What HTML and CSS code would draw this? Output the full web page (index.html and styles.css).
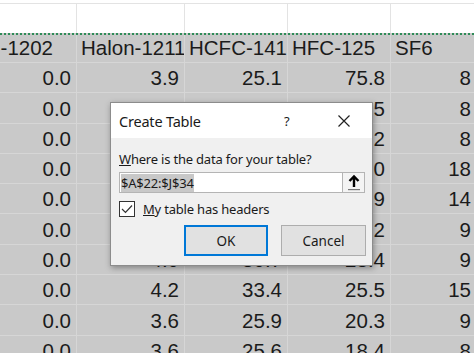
FILE: index.html
```html
<!DOCTYPE html>
<html lang="en">
<head>
  <meta charset="UTF-8" />
  <meta name="viewport" content="width=device-width, initial-scale=1.0"/>
  <title>Create Table</title>
  <link rel="stylesheet" href="styles.css">
</head>
<body>

  <div class="sheet">
    <div class="row blank">
      <div class="cell"></div><div class="cell"></div><div class="cell"></div><div class="cell"></div><div class="cell"></div>
    </div>

    <div class="selection">
      <div class="row head">
        <div class="cell">Halon-1202</div>
        <div class="cell">Halon-1211</div>
        <div class="cell">HCFC-141</div>
        <div class="cell">HFC-125</div>
        <div class="cell">SF6</div>
      </div>
      <div class="row"><div class="cell num">0.0</div><div class="cell num">3.9</div><div class="cell num">25.1</div><div class="cell num">75.8</div><div class="cell num">8</div></div>
      <div class="row"><div class="cell num">0.0</div><div class="cell num">3.8</div><div class="cell num">24.5</div><div class="cell num">16.5</div><div class="cell num">8</div></div>
      <div class="row"><div class="cell num">0.0</div><div class="cell num">3.9</div><div class="cell num">26.1</div><div class="cell num">19.2</div><div class="cell num">8</div></div>
      <div class="row"><div class="cell num">0.0</div><div class="cell num">4.0</div><div class="cell num">27.3</div><div class="cell num">21.0</div><div class="cell num">18</div></div>
      <div class="row"><div class="cell num">0.0</div><div class="cell num">4.1</div><div class="cell num">28.8</div><div class="cell num">23.9</div><div class="cell num">14</div></div>
      <div class="row"><div class="cell num">0.0</div><div class="cell num">4.1</div><div class="cell num">29.9</div><div class="cell num">22.2</div><div class="cell num">9</div></div>
      <div class="row"><div class="cell num">0.0</div><div class="cell num">4.0</div><div class="cell num">30.7</div><div class="cell num">23.4</div><div class="cell num">9</div></div>
      <div class="row"><div class="cell num">0.0</div><div class="cell num">4.2</div><div class="cell num">33.4</div><div class="cell num">25.5</div><div class="cell num">15</div></div>
      <div class="row"><div class="cell num">0.0</div><div class="cell num">3.6</div><div class="cell num">25.9</div><div class="cell num">20.3</div><div class="cell num">9</div></div>
      <div class="row"><div class="cell num">0.0</div><div class="cell num">3.6</div><div class="cell num">25.6</div><div class="cell num">18.4</div><div class="cell num">8</div></div>
    </div>
  </div>

  <div class="dialog">
    <div class="dialog-title">
      <span class="title-text">Create Table</span>
      <span class="title-help">?</span>
      <span class="title-close">
        <svg width="14" height="14" viewBox="0 0 14 14"><path d="M1.5 1.5 L12.5 12.5 M12.5 1.5 L1.5 12.5" stroke="#222" stroke-width="1.2" fill="none"/></svg>
      </span>
    </div>
    <div class="dialog-body">
      <div class="prompt"><u>W</u>here is the data for your table?</div>
      <div class="range-box">
        <div class="range-input"><span class="range-sel">$A$22:$J$34</span></div>
        <div class="range-btn">
          <svg width="14" height="17" viewBox="0 0 14 17"><path d="M7 2.5 L7 13 M2.5 7 L7 2.5 L11.5 7" stroke="#000" stroke-width="2.4" fill="none"/><rect x="1" y="15" width="12" height="1.2" fill="#777"/></svg>
        </div>
      </div>
      <label class="check-row">
        <span class="checkbox">
          <svg width="12" height="10" viewBox="0 0 12 10"><path d="M1 5 L4.5 8.5 L11 1.5" stroke="#333" stroke-width="1.2" fill="none"/></svg>
        </span>
        <span><u>M</u>y table has headers</span>
      </label>
      <div class="buttons">
        <button class="btn default">OK</button>
        <button class="btn">Cancel</button>
      </div>
    </div>
  </div>

</body>
</html>
```

FILE: styles.css
```css
body {
  margin: 0;
  padding: 0;
  background: #ffffff;
  font-family: 'Liberation Sans', Arial, sans-serif;
  width: 474px;
  height: 353px;
  overflow: hidden;
  position: relative;
}

.sheet {
  margin-left: -57px;
  padding-top: 3px;
}

.row {
  display: grid;
  grid-template-columns: 134px 108px 103px 103px 86px;
  height: 30.3px;
}

.cell {
  border-right: 1px solid #d6d6d6;
  border-bottom: 1px solid #d6d6d6;
  font-size: 20.5px;
  color: #1b1b1b;
  white-space: nowrap;
  overflow: hidden;
  display: flex;
  align-items: flex-end;
  padding: 0 4px 3px 4px;
  line-height: 22px;
}

.blank {
  height: 30px;
}

.blank .cell {
  border-top: 1px solid #e3e3e3;
  border-right-color: #e3e3e3;
  border-bottom: none;
}

.selection {
  background: #c9c9c9;
  border-top: 2px dotted #2e8b57;
}

.head {
  height: 28px;
}

.num {
  justify-content: flex-end;
  padding-right: 5px;
}

/* dialogo por cima da planilha */
.dialog {
  position: absolute;
  left: 110px;
  top: 102px;
  width: 261px;
  height: 162px;
  border: 1px solid #8c8c8c;
  background: #f0f0f0;
  box-shadow: 1px 2px 6px rgba(0, 0, 0, 0.35);
  font-family: 'Noto Sans', 'Open Sans', sans-serif;
  color: #1a1a1a;
  letter-spacing: -0.2px;
}

.dialog-title {
  background: #ffffff;
  height: 35px;
  display: flex;
  align-items: center;
  padding-left: 8px;
}

.title-text {
  font-size: 14.5px;
  flex: 1;
}

.title-help {
  font-size: 13px;
  width: 45px;
  margin-right: 8px;
}

.title-close {
  width: 35px;
  display: flex;
  align-items: center;
}

.dialog-body {
  padding: 12px 6px 0 8px;
}

.prompt {
  font-size: 13px;
  line-height: 18px;
}

.range-box {
  display: flex;
  margin-top: 4px;
  height: 21px;
  margin-right: 1px;
}

.range-input {
  flex: 1;
  background: #ffffff;
  border: 1px solid #b4b4b4;
  border-right: none;
  display: flex;
  align-items: center;
  padding-left: 1px;
  font-size: 13px;
}

.range-sel {
  background: #c8c8c8;
  line-height: 18px;
}

.range-btn {
  width: 21px;
  border: 1px solid #b4b4b4;
  background: #f4f4f4;
  display: flex;
  align-items: center;
  justify-content: center;
}

.check-row {
  display: flex;
  align-items: center;
  gap: 8px;
  margin-top: 7px;
  font-size: 13px;
  height: 17px;
}

.checkbox {
  width: 14px;
  height: 14px;
  border: 1px solid #333;
  background: #ffffff;
  display: flex;
  align-items: center;
  justify-content: center;
}

.buttons {
  display: flex;
  justify-content: flex-end;
  gap: 13px;
  margin-top: 8px;
}

.btn {
  width: 85px;
  height: 31px;
  background: #e1e1e1;
  border: 1px solid #adadad;
  font-family: 'Noto Sans', 'Open Sans', sans-serif;
  font-size: 13.5px;
  color: #1a1a1a;
  padding: 0;
}

.btn.default {
  border: 2px solid #0078d7;
  width: 84px;
}
```
